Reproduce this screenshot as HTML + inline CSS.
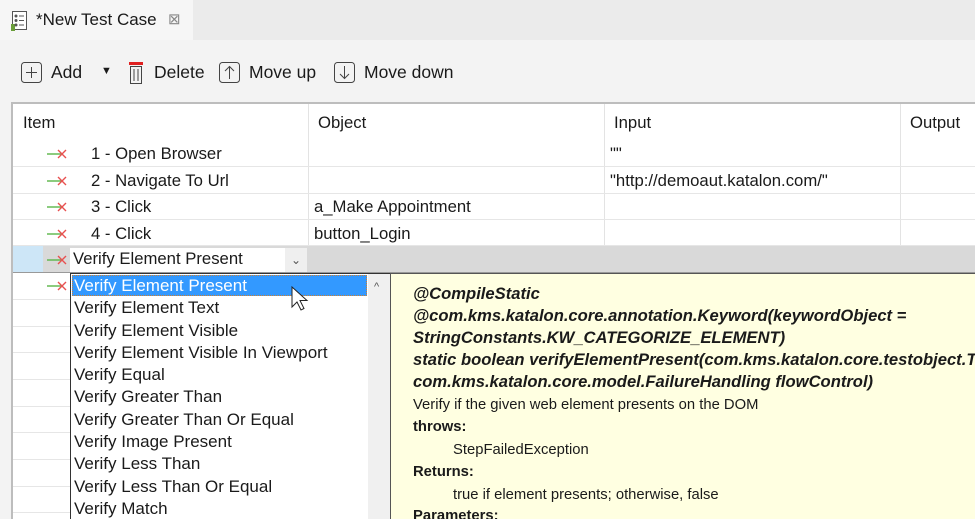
<!DOCTYPE html>
<html><head><style>
html,body{margin:0;width:975px;height:519px;overflow:hidden}
body{background:#f3f3f3;font-family:"Liberation Sans",sans-serif;font-size:16.7px;color:#1a1a1a;position:relative}
#w{position:absolute;left:0;top:0;width:975px;height:519px;overflow:hidden}
.a{position:absolute;white-space:nowrap}
.hl{position:absolute;height:1px;background:#e6e6e6}
.vl{position:absolute;width:1px;background:#e3e3e3}
.t{position:absolute;left:22px;white-space:nowrap;font-size:14.8px;line-height:20px}
.bi{font-weight:bold;font-style:italic;font-size:16.6px}
.b{font-weight:bold}
</style></head><body><div id="w">
<div class="a" style="left:0;top:0;width:975px;height:40px;background:#ebebeb"></div>
<div class="a" style="left:0;top:0;width:193px;height:40px;background:#f6f6f6"></div>
<svg class="a" style="left:9px;top:10px" width="22" height="22"><rect x="3.5" y="1.5" width="14" height="18" fill="#fff" stroke="#555"/><rect x="2" y="14" width="4" height="7" fill="#6a9e3a"/><g fill="#555"><circle cx="7" cy="6" r="1.5"/><circle cx="7" cy="10.5" r="1.5"/><circle cx="7" cy="15" r="1.5"/><rect x="10" y="5.5" width="5" height="1"/><rect x="10" y="10" width="5" height="1"/><rect x="10" y="14.5" width="5" height="1"/></g></svg>
<div class="a" style="left:36px;top:10px;font-size:17px">*New Test Case</div>
<div class="a" style="left:168px;top:10px;color:#888;font-size:15px">⊠</div>
<svg class="a" style="left:20px;top:61px" width="24" height="24"><rect x="1.5" y="1.5" width="20" height="20" rx="3" fill="none" stroke="#444"/><path d="M11.5 6v11M6 11.5h11" stroke="#444"/></svg>
<div class="a" style="left:51px;top:62px;font-size:17.5px">Add</div>
<div class="a" style="left:101px;top:65px;font-size:11px">▼</div>
<svg class="a" style="left:126px;top:60px" width="20" height="26"><rect x="3" y="2" width="14" height="3" fill="#e02020"/><rect x="4.5" y="6.5" width="11" height="17" fill="none" stroke="#444"/><path d="M8 9v12M12 9v12" stroke="#444"/></svg>
<div class="a" style="left:154px;top:62px;font-size:17.5px">Delete</div>
<svg class="a" style="left:218px;top:61px" width="24" height="24"><rect x="1.5" y="1.5" width="20" height="20" rx="3" fill="none" stroke="#444"/><path d="M11.5 18V6M7 10l4.5-4.5L16 10" fill="none" stroke="#444"/></svg>
<div class="a" style="left:249px;top:62px;font-size:17.5px">Move up</div>
<svg class="a" style="left:333px;top:61px" width="24" height="24"><rect x="1.5" y="1.5" width="20" height="20" rx="3" fill="none" stroke="#444"/><path d="M11.5 5v12M7 13l4.5 4.5L16 13" fill="none" stroke="#444"/></svg>
<div class="a" style="left:364px;top:62px;font-size:17.5px">Move down</div>
<div class="a" style="left:11px;top:102px;width:962px;height:415px;background:#fff;border-top:2px solid #bdbdbd;border-left:2px solid #bdbdbd"></div>
<div class="vl" style="left:308px;top:104px;height:170px"></div>
<div class="vl" style="left:604px;top:104px;height:170px"></div>
<div class="vl" style="left:900px;top:104px;height:170px"></div>
<div class="a" style="left:23px;top:113px">Item</div>
<div class="a" style="left:318px;top:113px">Object</div>
<div class="a" style="left:614px;top:113px">Input</div>
<div class="a" style="left:910px;top:113px">Output</div>
<div class="hl" style="left:13px;top:166px;width:962px"></div>
<div class="hl" style="left:13px;top:193px;width:962px"></div>
<div class="hl" style="left:13px;top:219px;width:962px"></div>
<div class="hl" style="left:13px;top:245px;width:962px"></div>
<div class="a" style="left:13px;top:246px;width:962px;height:26px;background:#d9d9d9"></div>
<div class="a" style="left:13px;top:246px;width:30px;height:26px;background:#cde6f7"></div>
<div class="a" style="left:70px;top:248px;width:215px;height:24px;background:#fff"></div>
<div class="a" style="left:285px;top:248px;width:22px;height:24px;background:#efefef;color:#555;font-size:12px;text-align:center;line-height:24px">⌄</div>
<div class="a" style="left:73px;top:249px">Verify Element Present</div>
<div class="a" style="left:13px;top:272px;width:962px;height:1px;background:#999"></div>
<svg class="a" style="left:46px;top:147px" width="24" height="130"><g stroke-width="1.4"><g><path d="M1 7h14" stroke="#5bb548"/><path d="M12 3l8 8M20 3l-8 8" stroke="#e85050"/></g><g transform="translate(0,27)"><path d="M1 7h14" stroke="#5bb548"/><path d="M12 3l8 8M20 3l-8 8" stroke="#e85050"/></g><g transform="translate(0,53)"><path d="M1 7h14" stroke="#5bb548"/><path d="M12 3l8 8M20 3l-8 8" stroke="#e85050"/></g><g transform="translate(0,80)"><path d="M1 7h14" stroke="#5bb548"/><path d="M12 3l8 8M20 3l-8 8" stroke="#e85050"/></g><g transform="translate(0,106)"><path d="M1 7h14" stroke="#5bb548"/><path d="M12 3l8 8M20 3l-8 8" stroke="#e85050"/></g></g></svg>
<svg class="a" style="left:46px;top:279px" width="24" height="15"><path d="M1 7h14" stroke="#5bb548" stroke-width="1.4"/><path d="M12 3l8 8M20 3l-8 8" stroke="#e85050" stroke-width="1.4"/></svg>
<div class="a" style="left:91px;top:144px">1 - Open Browser</div>
<div class="a" style="left:91px;top:171px">2 - Navigate To Url</div>
<div class="a" style="left:91px;top:197px">3 - Click</div>
<div class="a" style="left:91px;top:224px">4 - Click</div>
<div class="a" style="left:314px;top:197px">a_Make Appointment</div>
<div class="a" style="left:314px;top:224px">button_Login</div>
<div class="a" style="left:610px;top:144px">""</div>
<div class="a" style="left:610px;top:171px">"http://demoaut.katalon.com/"</div>
<div class="hl" style="left:13px;top:299px;width:57px"></div>
<div class="hl" style="left:13px;top:326px;width:57px"></div>
<div class="hl" style="left:13px;top:352px;width:57px"></div>
<div class="hl" style="left:13px;top:379px;width:57px"></div>
<div class="hl" style="left:13px;top:406px;width:57px"></div>
<div class="hl" style="left:13px;top:432px;width:57px"></div>
<div class="hl" style="left:13px;top:459px;width:57px"></div>
<div class="hl" style="left:13px;top:486px;width:57px"></div>
<div class="hl" style="left:13px;top:512px;width:57px"></div>
<div class="a" style="left:70px;top:273px;width:319px;height:246px;background:#fff;border:1px solid #333;border-bottom:0;overflow:hidden">
<div class="a" style="left:1px;top:1px;width:295px;height:21px;background:#3399ff;border:1px dotted #d08030;box-sizing:border-box"></div>
<div class="a" style="left:297px;top:0;width:22px;height:246px;background:#f0f0f0"></div>
<div class="a" style="left:303px;top:7px;font-size:11px;color:#555">^</div>
<div class="a" style="left:3px;top:1px;line-height:22.3px;font-size:17px"><span style="color:#fff">Verify Element Present</span><br>Verify Element Text<br>Verify Element Visible<br>Verify Element Visible In Viewport<br>Verify Equal<br>Verify Greater Than<br>Verify Greater Than Or Equal<br>Verify Image Present<br>Verify Less Than<br>Verify Less Than Or Equal<br>Verify Match</div>
</div>
<svg class="a" style="left:291px;top:286px" width="18" height="28"><path d="M1 1v20l5-5 4 8 3-1.5-4-8h7z" fill="#fff" stroke="#222"/></svg>
<div class="a" style="left:390px;top:273px;width:585px;height:246px;background:#ffffe1;border-left:1px solid #555;border-top:1px solid #555;overflow:hidden">
<div class="t bi" style="top:10px">@CompileStatic</div>
<div class="t bi" style="top:32px">@com.kms.katalon.core.annotation.Keyword(keywordObject =</div>
<div class="t bi" style="top:54px">StringConstants.KW_CATEGORIZE_ELEMENT)</div>
<div class="t bi" style="top:76px">static boolean verifyElementPresent(com.kms.katalon.core.testobject.TestObject to,</div>
<div class="t bi" style="top:98px">com.kms.katalon.core.model.FailureHandling flowControl)</div>
<div class="t" style="top:121px">Verify if the given web element presents on the DOM</div>
<div class="t b" style="top:143px">throws:</div>
<div class="t" style="top:166px;left:62px">StepFailedException</div>
<div class="t b" style="top:188px">Returns:</div>
<div class="t" style="top:211px;left:62px">true if element presents; otherwise, false</div>
<div class="t b" style="top:232px">Parameters:</div>
</div>
</div></body></html>
